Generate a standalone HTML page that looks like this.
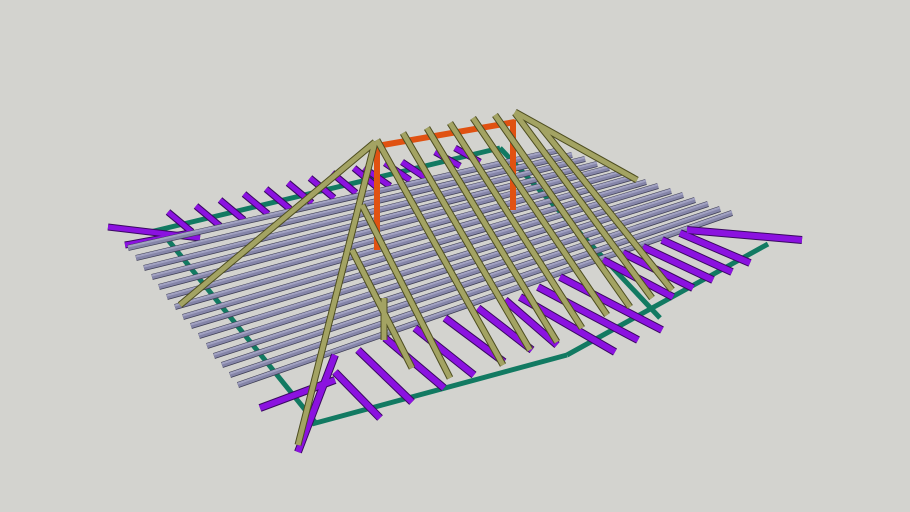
<!DOCTYPE html>
<html><head><meta charset="utf-8"><style>
html,body{margin:0;padding:0;background:#d3d3cf;width:910px;height:512px;overflow:hidden}
svg{display:block}
</style></head><body>
<svg width="910" height="512" viewBox="0 0 910 512" xmlns="http://www.w3.org/2000/svg" stroke-linecap="butt">
<defs>
<g id="joists">
<line x1="128" y1="248" x2="560" y2="150"/>
<line x1="136" y1="258" x2="572" y2="155"/>
<line x1="144" y1="268" x2="585" y2="159"/>
<line x1="152" y1="277" x2="597" y2="164"/>
<line x1="159" y1="287" x2="609" y2="168"/>
<line x1="167" y1="297" x2="621" y2="173"/>
<line x1="175" y1="307" x2="634" y2="177"/>
<line x1="183" y1="317" x2="646" y2="182"/>
<line x1="191" y1="326" x2="658" y2="186"/>
<line x1="199" y1="336" x2="671" y2="191"/>
<line x1="207" y1="346" x2="683" y2="195"/>
<line x1="214" y1="356" x2="695" y2="200"/>
<line x1="222" y1="365" x2="708" y2="204"/>
<line x1="230" y1="375" x2="720" y2="209"/>
<line x1="238" y1="385" x2="732" y2="213"/>
</g>
<g id="backtails">
<line x1="168" y1="212" x2="192" y2="232"/>
<line x1="196" y1="206" x2="220" y2="226"/>
<line x1="220" y1="200" x2="244" y2="220"/>
<line x1="244" y1="194" x2="268" y2="214"/>
<line x1="266" y1="189" x2="290" y2="209"/>
<line x1="288" y1="183" x2="312" y2="203"/>
<line x1="310" y1="178" x2="334" y2="198"/>
<line x1="332" y1="173" x2="356" y2="193"/>
<line x1="354" y1="168" x2="378" y2="188"/>
<line x1="364" y1="168" x2="390" y2="186"/>
<line x1="385" y1="163" x2="410" y2="180"/>
<line x1="402" y1="162" x2="426" y2="178"/>
<line x1="435" y1="152" x2="460" y2="166"/>
<line x1="455" y1="148" x2="480" y2="162"/>
<line x1="108" y1="227" x2="200" y2="238"/>
<line x1="125" y1="245" x2="190" y2="233"/>
</g>
<g id="fronttails">
<line x1="335" y1="372" x2="380" y2="418"/>
<line x1="358" y1="350" x2="412" y2="402"/>
<line x1="385" y1="338" x2="444" y2="388"/>
<line x1="415" y1="328" x2="474" y2="375"/>
<line x1="445" y1="318" x2="504" y2="362"/>
<line x1="478" y1="308" x2="532" y2="350"/>
<line x1="505" y1="300" x2="557" y2="345"/>
<line x1="520" y1="297" x2="615" y2="352"/>
<line x1="538" y1="287" x2="638" y2="340"/>
<line x1="560" y1="277" x2="662" y2="330"/>
<line x1="603" y1="260" x2="673" y2="297"/>
<line x1="623" y1="253" x2="693" y2="288"/>
<line x1="643" y1="247" x2="713" y2="280"/>
<line x1="662" y1="240" x2="732" y2="272"/>
<line x1="680" y1="233" x2="750" y2="263"/>
<line x1="687" y1="230" x2="802" y2="240"/>
<line x1="260" y1="408" x2="335" y2="380"/>
<line x1="298" y1="452" x2="335" y2="355"/>
</g>
<g id="rafters">
<line x1="375" y1="142" x2="180" y2="305"/>
<line x1="375" y1="142" x2="298" y2="445"/>
<line x1="515" y1="112" x2="637" y2="180"/>
<line x1="352" y1="250" x2="412" y2="368"/>
<line x1="362" y1="205" x2="450" y2="378"/>
<line x1="377" y1="140" x2="503" y2="365"/>
<line x1="403" y1="133" x2="530" y2="350"/>
<line x1="427" y1="128" x2="557" y2="342"/>
<line x1="450" y1="123" x2="582" y2="328"/>
<line x1="473" y1="118" x2="607" y2="315"/>
<line x1="495" y1="115" x2="630" y2="307"/>
<line x1="515" y1="113" x2="652" y2="298"/>
<line x1="540" y1="126" x2="672" y2="290"/>
<line x1="384" y1="298" x2="384" y2="340"/>
</g>
</defs>
<g stroke="#127a62" stroke-width="5">
<line x1="150" y1="232" x2="500" y2="148"/>
<line x1="160" y1="230" x2="315" y2="422"/>
<line x1="312" y1="424" x2="567" y2="355"/>
<line x1="567" y1="355" x2="768" y2="244"/>
<line x1="500" y1="148" x2="660" y2="318"/>
</g>
<use href="#backtails" stroke="#3a0a60" stroke-width="7"/>
<use href="#backtails" stroke="#8b12e0" stroke-width="5"/>
<use href="#joists" stroke="#3e3e55" stroke-width="6"/>
<use href="#joists" stroke="#8585a8" stroke-width="4.5"/>
<use href="#joists" stroke="#a2a2c2" stroke-width="2" transform="translate(0,-1.5)"/>
<use href="#fronttails" stroke="#3a0a60" stroke-width="8"/>
<use href="#fronttails" stroke="#8b12e0" stroke-width="6"/>
<g stroke="#e05212" stroke-width="6">
<line x1="377" y1="145" x2="377" y2="250"/>
<line x1="513" y1="120" x2="513" y2="210"/>
<line x1="377" y1="146" x2="515" y2="122"/>
</g>
<use href="#rafters" stroke="#4d4d20" stroke-width="7"/>
<use href="#rafters" stroke="#a3a363" stroke-width="5"/>
</svg>
</body></html>
